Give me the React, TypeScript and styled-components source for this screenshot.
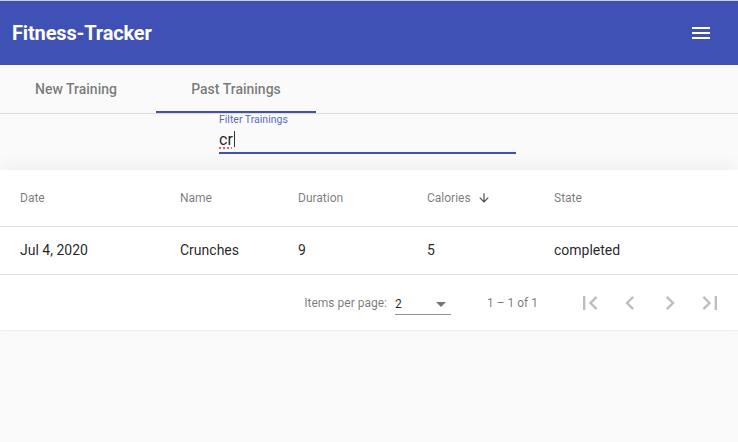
import styled, { createGlobalStyle } from 'styled-components';

const GlobalStyle = createGlobalStyle`
  html, body {
    margin: 0;
    padding: 0;
    background: #fafafa;
    font-family: Roboto, "Helvetica Neue", sans-serif;
  }
  #root {
    min-height: 442px;
    background: #fafafa;
  }
`;

const Toolbar = styled.header`
  display: flex;
  align-items: center;
  justify-content: space-between;
  height: 64px;
  border-top: 1px solid #cfcfd4;
  padding: 0 25px 0 12px;
  background: #3f51b5;
  color: #fff;
`;

const Title = styled.div`
  font-size: 20px;
  font-weight: 700;
  letter-spacing: -0.15px;
`;

const MenuButton = styled.div`
  display: flex;
  width: 24px;
  height: 24px;
`;

const TabBar = styled.nav`
  display: flex;
  height: 48px;
  border-bottom: 1px solid rgba(0, 0, 0, 0.12);
  margin-left: -4px;
`;

const Tab = styled.div<{ active?: boolean }>`
  position: relative;
  width: 160px;
  display: flex;
  align-items: center;
  justify-content: center;
  &::after {
    content: '';
    position: absolute;
    left: 0;
    right: 0;
    bottom: 0;
    height: 2px;
    background: ${(p) => (p.active ? '#3f51b5' : 'transparent')};
  }
`;

const TabLabel = styled.span`
  font-size: 14px;
  font-weight: 500;
  color: rgba(0, 0, 0, 0.87);
  opacity: 0.6;
`;

const FilterArea = styled.div`
  height: 56px;
  padding-left: 219px;
`;

const Field = styled.div`
  width: 297px;
`;

const FieldLabel = styled.div`
  font-size: 10.5px;
  line-height: 12px;
  color: #3f51b5;
  opacity: 0.85;
`;

const FieldInput = styled.div`
  display: flex;
  align-items: center;
  height: 26px;
  font-size: 16px;
  color: rgba(0, 0, 0, 0.87);
  border-bottom: 2px solid #3f51b5;
`;

const Misspelled = styled.span`
  text-decoration: underline dotted #e53935;
  text-underline-offset: 3px;
`;

const Caret = styled.span`
  display: inline-block;
  width: 1px;
  height: 16px;
  background: #333;
  margin-left: 1px;
`;

const Card = styled.section`
  background: #fff;
  box-shadow: 0 -8px 16px -2px rgba(0, 0, 0, 0.045), 0 1px 1px 0 rgba(0, 0, 0, 0.04);
`;

const Row = styled.div<{ header?: boolean }>`
  display: grid;
  grid-template-columns: 160px 118px 129px 127px 1fr;
  align-items: center;
  padding: 0 0 ${(p) => (p.header ? '0' : '2px')} 20px;
  height: ${(p) => (p.header ? '57px' : '48px')};
  box-sizing: border-box;
  border-bottom: 1px solid rgba(0, 0, 0, 0.12);
`;

const HeadCell = styled.div`
  display: flex;
  align-items: center;
  gap: 6px;
  font-size: 12px;
  font-weight: 400;
  color: rgba(0, 0, 0, 0.54);
`;

const SortArrow = styled.span`
  display: flex;
  color: rgba(0, 0, 0, 0.7);
`;

const Cell = styled.div`
  font-size: 14px;
  color: rgba(0, 0, 0, 0.87);
`;

const Paginator = styled.div`
  display: flex;
  align-items: center;
  justify-content: flex-end;
  height: 55px;
  padding-right: 8px;
  font-size: 12px;
  color: rgba(0, 0, 0, 0.54);
`;

const PageSizeLabel = styled.div`
  margin-right: 8px;
`;

const PageSelect = styled.div`
  display: flex;
  align-items: center;
  justify-content: space-between;
  width: 56px;
  height: 20px;
  margin-top: 4px;
  border-bottom: 1px solid rgba(0, 0, 0, 0.42);
  color: rgba(0, 0, 0, 0.87);
  font-size: 12px;
`;

const SelectArrow = styled.span`
  width: 0;
  height: 0;
  margin-right: 5px;
  border-left: 5px solid transparent;
  border-right: 5px solid transparent;
  border-top: 5px solid rgba(0, 0, 0, 0.54);
`;

const RangeLabel = styled.div`
  margin: 0 32px 0 36px;
`;

const PageButton = styled.div`
  display: flex;
  align-items: center;
  justify-content: center;
  width: 40px;
  height: 40px;
  color: rgba(0, 0, 0, 0.26);
`;

const Icon = ({ d, size = 24 }: { d: string; size?: number }) => (
  <svg width={size} height={size} viewBox="0 0 24 24" fill="currentColor">
    <path d={d} />
  </svg>
);

const icons = {
  menu: 'M3 18h18v-2H3v2zm0-5h18v-2H3v2zm0-7v2h18V6H3z',
  down: 'M20 12l-1.41-1.41L13 16.17V4h-2v12.17l-5.58-5.59L4 12l8 8 8-8z',
  first: 'M18.41 16.59L13.82 12l4.59-4.59L17 6l-6 6 6 6zM6 6h2v12H6z',
  prev: 'M15.41 7.41L14 6l-6 6 6 6 1.41-1.41L10.83 12z',
  next: 'M10 6L8.59 7.41 13.17 12l-4.58 4.59L10 18l6-6z',
  last: 'M5.59 7.41L10.18 12l-4.59 4.59L7 18l6-6-6-6zM16 6h2v12h-2z',
};

const trainings = [
  { date: 'Jul 4, 2020', name: 'Crunches', duration: 9, calories: 5, state: 'completed' },
];

export default function App() {
  return (
    <>
      <GlobalStyle />
      <Toolbar>
        <Title>Fitness-Tracker</Title>
        <MenuButton>
          <Icon d={icons.menu} />
        </MenuButton>
      </Toolbar>
      <TabBar>
        <Tab><TabLabel>New Training</TabLabel></Tab>
        <Tab active><TabLabel>Past Trainings</TabLabel></Tab>
      </TabBar>
      <FilterArea>
        <Field>
          <FieldLabel>Filter Trainings</FieldLabel>
          <FieldInput>
            <Misspelled>cr</Misspelled>
            <Caret />
          </FieldInput>
        </Field>
      </FilterArea>
      <Card>
        <Row header>
          <HeadCell>Date</HeadCell>
          <HeadCell>Name</HeadCell>
          <HeadCell>Duration</HeadCell>
          <HeadCell>
            Calories
            <SortArrow>
              <Icon d={icons.down} size={14} />
            </SortArrow>
          </HeadCell>
          <HeadCell>State</HeadCell>
        </Row>
        {trainings.map((t) => (
          <Row key={t.date + t.name}>
            <Cell>{t.date}</Cell>
            <Cell>{t.name}</Cell>
            <Cell>{t.duration}</Cell>
            <Cell>{t.calories}</Cell>
            <Cell>{t.state}</Cell>
          </Row>
        ))}
        <Paginator>
          <PageSizeLabel>Items per page:</PageSizeLabel>
          <PageSelect>
            <span>2</span>
            <SelectArrow />
          </PageSelect>
          <RangeLabel>1 – 1 of 1</RangeLabel>
          <PageButton><Icon d={icons.first} size={28} /></PageButton>
          <PageButton><Icon d={icons.prev} size={28} /></PageButton>
          <PageButton><Icon d={icons.next} size={28} /></PageButton>
          <PageButton><Icon d={icons.last} size={28} /></PageButton>
        </Paginator>
      </Card>
    </>
  );
}
